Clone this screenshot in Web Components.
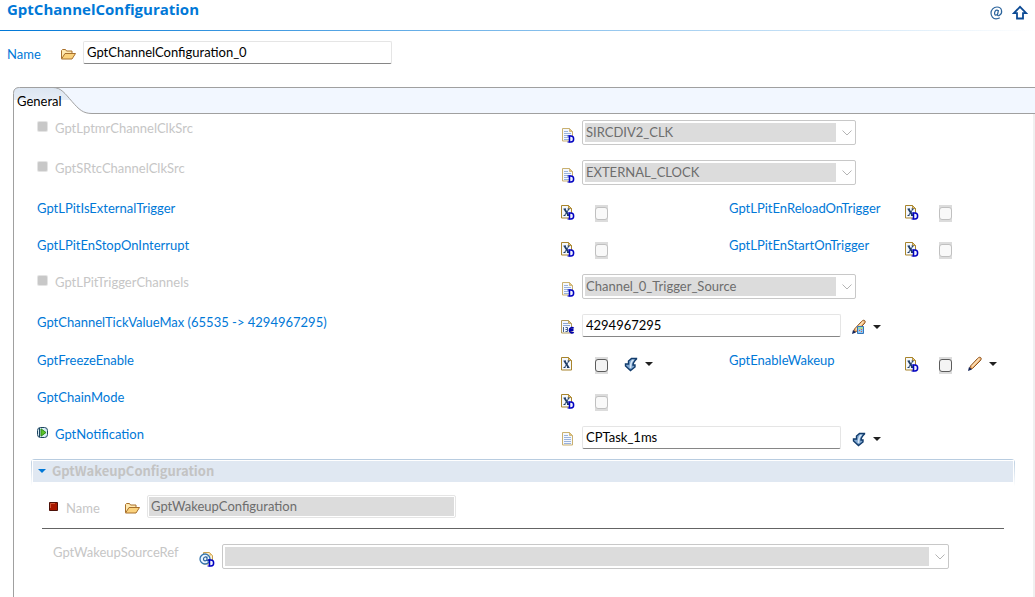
<!DOCTYPE html>
<html lang="en">
<head>
<meta charset="utf-8">
<title>GptChannelConfiguration</title>
<style>
  body {
    margin: 0;
    min-height: 100vh;
    display: flex;
    flex-direction: column;
    background: #fff;
    color: #000;
    font: 13px/16px Lato, "Open Sans", sans-serif;
    --blue: #0078d7;
    --off: #c6c6c6;
    --fill: #dcdcdc;
  }
</style>
</head>
<body>
  <page-header heading="GptChannelConfiguration"></page-header>
  <name-field value="GptChannelConfiguration_0"></name-field>
  <tab-folder label="General">
    <config-grid>
      <config-field label="GptLptmrChannelClkSrc" mark="off" type="combo" icon="docD" value="SIRCDIV2_CLK" disabled></config-field>
      <config-field label="GptSRtcChannelClkSrc" mark="off" type="combo" icon="docD" value="EXTERNAL_CLOCK" disabled></config-field>
      <config-field label="GptLPitIsExternalTrigger" type="check" icon="boolD" locked></config-field>
      <config-field label="GptLPitEnReloadOnTrigger" type="check" icon="boolD" locked second></config-field>
      <config-field label="GptLPitEnStopOnInterrupt" type="check" icon="boolD" locked></config-field>
      <config-field label="GptLPitEnStartOnTrigger" type="check" icon="boolD" locked second></config-field>
      <config-field label="GptLPitTriggerChannels" mark="off" type="combo" icon="docD" value="Channel_0_Trigger_Source" disabled></config-field>
      <config-field label="GptChannelTickValueMax (65535 -&gt; 4294967295)" type="text" icon="numC" value="4294967295">
        <tool-menu icon="pencilCalc" label="Edit or calculate"></tool-menu>
      </config-field>
      <config-field label="GptFreezeEnable" type="check" icon="bool">
        <tool-menu icon="bolt" label="Reset value"></tool-menu>
      </config-field>
      <config-field label="GptEnableWakeup" type="check" icon="boolD" second>
        <tool-menu icon="pencil" label="Edit value"></tool-menu>
      </config-field>
      <config-field label="GptChainMode" type="check" icon="boolD" locked></config-field>
      <config-field label="GptNotification" mark="on" type="text" icon="doc" value="CPTask_1ms">
        <tool-menu icon="bolt" label="Reset value"></tool-menu>
      </config-field>
    </config-grid>
    <config-section heading="GptWakeupConfiguration">
      <name-field slot="name" value="GptWakeupConfiguration" mark="red" disabled></name-field>
      <ref-field label="GptWakeupSourceRef"></ref-field>
    </config-section>
  </tab-folder>

<script>
const sheet = (color, x) => `
  <path d="M${x + .5} 1.500h7l3 3v9.500h-10z" fill="#f4f8fe" stroke="${color}"/>
  <path d="M${x + 7.5} 1.500v3h3z" fill="#e8c878" stroke="${color}" stroke-width=".8"/>`;
const lines = '<path d="M3 4.500h4M3 6.500h7M3 8.500h7M3 10.500h7M3 12.500h7" stroke="#9ab2dc"/>';
const cross = '<path d="M3.500 5l4 6.500" stroke="#1d3b63" stroke-width="1.800"/><path d="M8 5l-4.500 6.500" stroke="#1d3b63"/><path d="M2.500 5h2.500M6.500 5h2M2.500 11.500h2M6 11.500h2.500" stroke="#1d3b63"/>';
const badgeD = '<path d="M8.500 9h1.500c3.500 0 3.500 6 0 6H8.500z" fill="#f0f2ff" stroke="#0000c0" stroke-width="1.500"/><path d="M6.500 9h2M6.500 15h2" stroke="#0000c0"/>';
const body = '<path d="M2.500 13l1-3 7-7.500c1.500-1.500 2.500-1.500 3.300-.8s.5 1.800-.8 3.300l-7.500 7.500z" fill="#f0b070" stroke="#8c5522"/><path d="M5 10.500l7.500-8" stroke="#fbe0b8" stroke-width="1.500"/><path d="M1 15l1-4 3 2.500z" fill="#14245a"/>';

const icons = {
  doc: sheet('#c9b070', 1) + lines,
  docD: sheet('#c9b070', 1) + lines + badgeD,
  bool: sheet('#a8842c', 0) + cross,
  boolD: sheet('#a8842c', 0) + cross + badgeD,
  numC: sheet('#b09a5c', 0) + `
    <path d="M2 4.500h5M2 6.500h7" stroke="#8ba6d4"/>
    <path d="M2.500 8v5M4.500 8.500h2v4h-2M4.500 10.500h2" fill="none" stroke="#44618f"/>
    <path d="M12.500 9.500c-1-1.500-4-1-4 1.700s3 3.200 4 1.700M8.500 11h4" fill="none" stroke="#0000a8" stroke-width="1.800"/>`,
  folder: `
    <path d="M1.500 12.500v-8l1-1h3l1 1.500h5.500v2.500" fill="#ffe9b0" stroke="#a8702c"/>
    <path d="M1.500 13l3.500-5.500h10.500l-3.500 5.500z" fill="#fbd27c" stroke="#a8702c"/>`,
  bolt: `
    <path d="M13.500 2.500H8.500L5.500 5v3H2.500v2l5 4.500 4.500-3.500V9H10c0-2 1-3.500 3.500-6z" fill="#7ea6d0" stroke="#123c6c" stroke-width="1.400"/>
    <path d="M10.500 4C8 5 7.500 7 7.500 12" fill="none" stroke="#d8e8f8" stroke-width="1.600"/>`,
  pencil: body,
  pencilCalc: body + '<path d="M6.500 7.500h6v7h-6z" fill="#8cc8f4" stroke="#3474b8"/><path d="M7 8h5v2H7z" fill="#a8d8a0"/><path d="M8 11.500h1M10 12.500h1M10 10.500h1" stroke="#e06048"/>',
  at: '<path d="M10.500 5l-1 4.500c-.3 1.500 1 1.500 2 .8 1.500-1 2.500-3 2-5C13 3 11 2 9 2 5.500 2 3 5 3 8s2 5.800 5 5.800c1.500 0 2.700-.3 3.800-1M10.300 6C9.500 4.800 8 5 7.200 6.200c-1 1.500-.8 3.800.5 4 1 .1 1.800-.8 2.300-2" fill="none" stroke="#2c649c" stroke-width="1.200"/>',
  up: '<path d="M8 1.800L1.800 8.200H5v5.300h6V8.200h3.200z" fill="#fff" stroke="#0c4a94" stroke-width="1.800"/>',
  refD: `
    <path d="M4.500 1.500h6l3 3V13h-9z" fill="#fdf3d8" stroke="#c9a04c"/>
    <path d="M10.500 1.500v3h3z" fill="#e8c070"/>
    <circle cx="6" cy="8" r="5" fill="#eaf4fe" stroke="#3474ac" stroke-width="1.300"/>
    <path d="M8 5.500v4c.8 1 2 0 2-1.500M8 7c-.8-1.800-3.500-1.300-3.500 1s2.500 2.500 3.500.5" fill="none" stroke="#2c649c" stroke-width="1.200"/>
    <g transform="translate(2)">${badgeD}</g>`,
  off: '<rect x="0" y="0" width="11" height="11" rx="2" fill="#e4e4e4"/><rect x="1" y="1" width="9" height="9" rx="1" fill="#c8c8c8"/>',
  on: '<rect x=".5" y=".5" width="10" height="10" rx="3" fill="#d8ecf4" stroke="#1c4460"/><path d="M2.500 1v9" stroke="#1c4460"/><path d="M4 1.800l5 3.700-5 3.700z" fill="#5cc428" stroke="#2c8c18"/>',
  red: '<path d="M1.500 1.500h8v8h-8z" fill="#a81800" stroke="#4c1008"/><path d="M2.500 7V2.500H7" fill="none" stroke="#d05838"/>',
};

// draws one of the icons above, 16px wide unless it is a small mark
class UiIcon extends HTMLElement {
  constructor() {
    super();
    this.shadow = this.attachShadow({ mode: 'open' });
  }

  connectedCallback() {
    const name = this.getAttribute('name');
    const size = ['off', 'on', 'red'].includes(name) ? 11 : 16;
    this.shadow.innerHTML = /*html*/`
      <style>
        :host { display: block; flex: none; }
        svg { display: block; }
      </style>
      <svg width="${size}" height="${size}" viewBox="0 0 ${size} ${size}" fill="none" aria-hidden="true">${icons[name]}</svg>
    `;
  }
}

const controlStyles = /*css*/`
  input, select {
    box-sizing: border-box;
    margin: 0;
    font: inherit;
    color: inherit;
    outline: none;
  }

  input[type=text] {
    height: 23px;
    padding: 0 3px 2px;
    border: 1px solid #e5e5e5;
    border-bottom-color: #868686;
    border-radius: 2px;
    background: #fff;
  }

  input[type=text]:disabled {
    color: #6d6d6d;
    border-bottom-color: #e5e5e5;
    background: linear-gradient(var(--fill), var(--fill)) no-repeat 1px 1px / calc(100% - 2px) 19px;
  }

  .combo {
    display: grid;
    align-items: center;
  }

  .combo > * { grid-area: 1 / 1; }

  .combo svg {
    justify-self: end;
    margin-right: 4px;
    pointer-events: none;
  }

  select {
    width: 100%;
    height: 25px;
    padding: 0 22px 2px 3px;
    appearance: none;
    border: 1px solid #c8c8c8;
    border-radius: 2px;
    background: linear-gradient(var(--fill), var(--fill)) no-repeat 2px 2px / calc(100% - 21px) 19px;
  }

  select:disabled {
    color: #6d6d6d;
    opacity: 1;
  }
`;

const combo = (value) => /*html*/`
  <div class="combo">
    <select id="control" disabled><option>${value}</option></select>
    <svg width="10" height="6" viewBox="0 0 10 6" fill="none"><path d="M.5 .5L5 5l4.500-4.500" stroke="#b4b4b4"/></svg>
  </div>
`;

class PageHeader extends HTMLElement {
  constructor() {
    super();
    this.shadow = this.attachShadow({ mode: 'open' });
  }

  connectedCallback() {
    this.shadow.innerHTML = /*html*/`
      <style>
        :host { display: block; }

        header {
          display: flex;
          align-items: flex-start;
          height: 30px;
          padding: 0 7px;
        }

        h1 {
          flex: 1;
          margin: 0;
          font: bold 15px/18px "Open Sans", sans-serif;
          color: var(--blue);
        }

        nav {
          display: flex;
          gap: 8px;
          padding-top: 5px;
        }

        button {
          padding: 0;
          border: none;
          background: none;
        }

        .rule {
          height: 1px;
          background: linear-gradient(to right, var(--blue), #fff);
        }
      </style>
      <header>
        <h1>${this.getAttribute('heading')}</h1>
        <nav>
          <button aria-label="References"><ui-icon name="at"></ui-icon></button>
          <button aria-label="Go up"><ui-icon name="up"></ui-icon></button>
        </nav>
      </header>
      <div class="rule"></div>
    `;
  }
}

class NameField extends HTMLElement {
  constructor() {
    super();
    this.shadow = this.attachShadow({ mode: 'open' });
  }

  connectedCallback() {
    const mark = this.getAttribute('mark');
    const disabled = this.hasAttribute('disabled');
    this.shadow.innerHTML = /*html*/`
      <style>
        ${controlStyles}

        :host {
          display: flex;
          align-items: center;
          padding: 10px 7px 23px;
        }

        :host([disabled]) { padding: 0; }

        label {
          width: 53px;
          padding-top: 3px;
          color: var(--blue);
        }

        :host([disabled]) label {
          width: 58px;
          color: var(--off);
        }

        .mark { margin-right: 7px; }

        .folder {
          margin-right: 7px;
          padding-top: 3px;
        }

        input { flex: 0 1 309px; }
      </style>
      ${mark ? `<ui-icon class="mark" name="${mark}"></ui-icon>` : ''}
      <label for="name">Name</label>
      <ui-icon class="folder" name="folder"></ui-icon>
      <input id="name" type="text" value="${this.getAttribute('value')}" ${disabled ? 'disabled' : ''}>
    `;
  }
}

class TabFolder extends HTMLElement {
  constructor() {
    super();
    this.shadow = this.attachShadow({ mode: 'open' });
  }

  connectedCallback() {
    this.shadow.innerHTML = /*html*/`
      <style>
        :host {
          flex: 1;
          display: flex;
          flex-direction: column;
          margin-left: 13px;
        }

        .bar {
          display: flex;
          height: 27px;
        }

        .rest {
          flex: 1;
          border: solid #a0a0a0;
          border-width: 1px 0;
          background: #f2f7ff;
        }

        button {
          display: grid;
          padding: 0;
          border: none;
          background: none;
          font: inherit;
          text-align: left;
        }

        button > * { grid-area: 1 / 1; }

        button span {
          z-index: 1;
          padding: 6px 0 0 4px;
        }

        svg { display: block; }

        .panel {
          flex: 1;
          padding: 6px 18px 27px;
          border-left: 1px solid #a0a0a0;
          border-right: 2px solid #f0f0f0;
        }
      </style>
      <div class="bar" role="tablist">
        <button role="tab" aria-selected="true">
          <svg width="79" height="27" viewBox="0 0 79 27" fill="none">
            <defs>
              <linearGradient id="shade" x2="0" y2="1">
                <stop offset="0" stop-color="#dce6f2"/>
                <stop offset=".48" stop-color="#e6edf6"/>
                <stop offset=".48" stop-color="#fff"/>
              </linearGradient>
            </defs>
            <path d="M8 0h71v27h-71z" fill="#f2f7ff"/>
            <path d="M.5 27V6.500c0-4 2-6 6-6H40c8 0 12 6 19 14 7 8 11 12 19 12V27z" fill="url(#shade)"/>
            <path d="M.5 27V6.500c0-4 2-6 6-6H40c8 0 12 6 19 14 7 8 11 12 20 12M40 .5h39" stroke="#a0a0a0"/>
          </svg>
          <span>${this.getAttribute('label')}</span>
        </button>
        <div class="rest"></div>
      </div>
      <div class="panel" role="tabpanel"><slot></slot></div>
    `;
  }
}

class ConfigGrid extends HTMLElement {
  constructor() {
    super();
    this.shadow = this.attachShadow({ mode: 'open' });
  }

  connectedCallback() {
    this.shadow.innerHTML = /*html*/`
      <style>
        :host {
          display: grid;
          grid-template-columns: 524fr 168fr 176fr 110fr;
          row-gap: 15px;
          margin: 0 0 10px 5px;
        }
      </style>
      <slot></slot>
    `;
  }
}

// label and control are placed straight into the columns of config-grid
class ConfigField extends HTMLElement {
  constructor() {
    super();
    this.shadow = this.attachShadow({ mode: 'open' });
  }

  control() {
    const value = this.getAttribute('value') || '';
    switch (this.getAttribute('type')) {
      case 'combo':
        return combo(value);
      case 'text':
        return `<input id="control" type="text" value="${value}">`;
      default:
        return `<span class="check"><input id="control" type="checkbox" ${this.hasAttribute('locked') ? 'disabled' : ''}></span>`;
    }
  }

  connectedCallback() {
    const mark = this.getAttribute('mark');
    this.shadow.innerHTML = /*html*/`
      <style>
        ${controlStyles}

        :host { display: contents; }

        .label {
          grid-column: 1;
          display: flex;
          align-items: flex-start;
          gap: 7px;
          min-width: 0;
          color: var(--blue);
          white-space: nowrap;
        }

        .label ui-icon { padding-top: 1px; }

        .field {
          grid-column: 2 / span 2;
          display: flex;
          align-items: flex-end;
          min-height: 22px;
        }

        .field > ui-icon { margin: 0 5px 2px 0; }

        .combo { flex: 0 1 274px; }

        input[type=text] { flex: 0 1 259px; }

        .check {
          display: flex;
          align-items: center;
          height: 17px;
          margin: 0 5px 0 13px;
          background: var(--fill);
        }

        input[type=checkbox] {
          width: 13px;
          height: 13px;
          appearance: none;
          border: 1px solid #5c5c5c;
          border-radius: 3px;
          background: #f4f4f4;
        }

        input[type=checkbox]:disabled {
          border-color: #c0c0c0;
          background: #f9f9f9;
        }

        :host([disabled]) .label { color: var(--off); }
        :host([type=check]) .field { grid-column: 2; }
        :host([second]) .label { grid-column: 3; }
        :host([second]) .field { grid-column: 4; }
      </style>
      <div class="label">
        ${mark ? `<ui-icon name="${mark}"></ui-icon>` : ''}
        <label for="control">${this.getAttribute('label')}</label>
      </div>
      <div class="field">
        <ui-icon name="${this.getAttribute('icon')}"></ui-icon>
        ${this.control()}
        <slot></slot>
      </div>
    `;
  }
}

class ToolMenu extends HTMLElement {
  constructor() {
    super();
    this.shadow = this.attachShadow({ mode: 'open' });
  }

  connectedCallback() {
    this.shadow.innerHTML = /*html*/`
      <style>
        :host {
          display: block;
          margin-left: 10px;
        }

        button {
          display: flex;
          align-items: center;
          gap: 6px;
          padding: 0 0 2px;
          border: none;
          background: none;
        }

        .caret {
          border: 4px solid transparent;
          border-top-color: #202020;
          border-bottom: none;
        }
      </style>
      <button aria-label="${this.getAttribute('label')}">
        <ui-icon name="${this.getAttribute('icon')}"></ui-icon>
        <span class="caret"></span>
      </button>
    `;
  }
}

class ConfigSection extends HTMLElement {
  constructor() {
    super();
    this.shadow = this.attachShadow({ mode: 'open' });
  }

  connectedCallback() {
    this.shadow.innerHTML = /*html*/`
      <style>
        :host { display: block; }

        .head {
          height: 27px;
          margin-left: -1px;
          padding: 2px 2px 0;
          box-sizing: border-box;
          border-radius: 4px 4px 0 0;
          background:
            linear-gradient(#b8cce0, #fff) left / 1px 100% no-repeat,
            linear-gradient(#b8cce0, #fff) right / 1px 100% no-repeat,
            linear-gradient(#b8cce0, #b8cce0) top / 100% 1px no-repeat;
        }

        button {
          display: flex;
          align-items: center;
          gap: 6px;
          width: 100%;
          height: 21px;
          padding: 0 5px 2px;
          border: none;
          background: #e0e8f2;
          color: #c3c3c3;
          font: bold 13px/18px "Noto Sans CJK SC", "Open Sans", sans-serif;
        }

        .caret {
          border: 4px solid transparent;
          border-top-color: var(--blue);
          border-bottom: none;
        }

        .name { padding: 9px 16px 10px; }

        hr {
          margin: 0 11px 15px 10px;
          border: none;
          border-top: 1px solid #646464;
        }
      </style>
      <div class="head">
        <button aria-expanded="true"><span class="caret"></span>${this.getAttribute('heading')}</button>
      </div>
      <div class="name"><slot name="name"></slot></div>
      <hr>
      <slot></slot>
    `;
  }
}

class RefField extends HTMLElement {
  constructor() {
    super();
    this.shadow = this.attachShadow({ mode: 'open' });
  }

  connectedCallback() {
    this.shadow.innerHTML = /*html*/`
      <style>
        ${controlStyles}

        :host {
          display: flex;
          align-items: flex-start;
          padding: 0 66px 0 21px;
        }

        label {
          width: 146px;
          color: var(--off);
        }

        ui-icon { margin: 7px 7px 0 0; }

        .combo { flex: 1; }
      </style>
      <label for="control">${this.getAttribute('label')}</label>
      <ui-icon name="refD"></ui-icon>
      ${combo('')}
    `;
  }
}

customElements.define('ui-icon', UiIcon);
customElements.define('page-header', PageHeader);
customElements.define('name-field', NameField);
customElements.define('tab-folder', TabFolder);
customElements.define('config-grid', ConfigGrid);
customElements.define('config-field', ConfigField);
customElements.define('tool-menu', ToolMenu);
customElements.define('config-section', ConfigSection);
customElements.define('ref-field', RefField);
</script>
</body>
</html>
